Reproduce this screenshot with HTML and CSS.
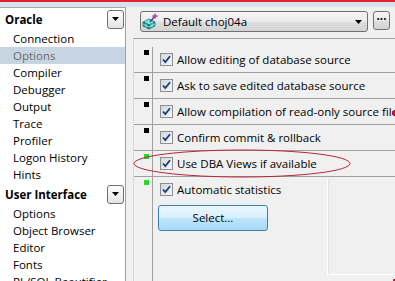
FILE: index.html
```html
<!DOCTYPE html>
<html>
<head>
  <title>Preferences</title>
  <link rel="stylesheet" href="styles.css">
</head>

<body>
  <div class="top-bar"></div>

  <div class="main">
    <div class="nav">
      <div class="nav-head">Oracle
        <span class="drop-btn"><svg width="7" height="4" viewBox="0 0 7 4"><path d="M0 0h7L3.5 4z" fill="#000"/></svg></span>
      </div>
      <div class="nav-item">Connection</div>
      <div class="nav-item selected">Options</div>
      <div class="nav-item">Compiler</div>
      <div class="nav-item">Debugger</div>
      <div class="nav-item">Output</div>
      <div class="nav-item">Trace</div>
      <div class="nav-item">Profiler</div>
      <div class="nav-item">Logon History</div>
      <div class="nav-item">Hints</div>
      <div class="nav-head">User Interface
        <span class="drop-btn"><svg width="7" height="4" viewBox="0 0 7 4"><path d="M0 0h7L3.5 4z" fill="#000"/></svg></span>
      </div>
      <div class="nav-item">Options</div>
      <div class="nav-item">Object Browser</div>
      <div class="nav-item">Editor</div>
      <div class="nav-item">Fonts</div>
      <div class="nav-item">PL/SQL Beautifier</div>
    </div>

    <div class="content">
      <div class="profile-row">
        <div class="combo">
          <svg class="combo-icon" width="17" height="17" viewBox="0 0 17 17">
            <path d="M1 9l6-3 6 3-6 3z" fill="#5fd6d0" stroke="#0d6e70" stroke-width="0.8"/>
            <path d="M1 9v4l6 3v-4z" fill="#1a9a98" stroke="#0d6e70" stroke-width="0.8"/>
            <path d="M7 12v4l6-3V9z" fill="#2bb5b2" stroke="#0d6e70" stroke-width="0.8"/>
            <path d="M3 8l6 3M5 7l6 3M4 10.5v4M10 10.5v4M1 11l6 3 6-3" stroke="#d8f6f4" stroke-width="0.6" fill="none"/>
            <path d="M8 9l5-6" stroke="#6a2a7a" stroke-width="1.2"/>
            <path d="M13 0.5l0.9 2 2 0.5-2 0.7-0.9 2-0.8-2-2-0.7 2-0.5z" fill="#d03cc8" stroke="#7a1f78" stroke-width="0.4"/>
          </svg>
          <span class="combo-text">Default choj04a</span>
          <svg class="combo-arrow" width="7" height="4" viewBox="0 0 7 4"><path d="M0 0h7L3.5 4z" fill="#000"/></svg>
        </div>
        <div class="dots-btn">&middot;&middot;&middot;</div>
      </div>

      <div class="grid">
        <div class="grid-row">
          <div class="gutter"><span class="mark"></span></div>
          <div class="cell"><span class="check"></span>Allow editing of database source</div>
        </div>
        <div class="grid-row">
          <div class="gutter"><span class="mark"></span></div>
          <div class="cell"><span class="check"></span>Ask to save edited database source</div>
        </div>
        <div class="grid-row">
          <div class="gutter"><span class="mark"></span></div>
          <div class="cell"><span class="check"></span>Allow compilation of read-only source files</div>
        </div>
        <div class="grid-row">
          <div class="gutter"><span class="mark"></span></div>
          <div class="cell"><span class="check"></span>Confirm commit &amp; rollback</div>
        </div>
        <div class="grid-row">
          <div class="gutter"><span class="mark green"></span></div>
          <div class="cell"><span class="check"></span>Use DBA Views if available</div>
        </div>
        <div class="grid-row last">
          <div class="gutter"><span class="mark green"></span></div>
          <div class="cell-wide">
            <div class="cell-left">
              <div class="cell"><span class="check"></span>Automatic statistics</div>
              <div class="select-btn">Select...</div>
            </div>
            <div class="frame"></div>
          </div>
        </div>
      </div>
    </div>
  </div>

  <svg class="marks" width="395" height="281" viewBox="0 0 395 281">
    <ellipse cx="242" cy="163.5" rx="108" ry="13.5" fill="none" stroke="#b8243a" stroke-width="1"/>
    <rect x="392" y="111" width="3" height="4" fill="#c01830"/>
    <rect x="393" y="279" width="2" height="2" fill="#e01020"/>
  </svg>
</body>
</html>
```

FILE: styles.css
```css
body {
  margin: 0;
  padding: 0;
  width: 395px;
  height: 281px;
  overflow: hidden;
  background-color: #f0f0f0;
  font-family: 'Open Sans', 'Noto Sans', sans-serif;
  font-size: 11.5px;
  color: #000;
}

.top-bar {
  height: 5px;
  border-top: 2px solid #e2232b;
  background-color: #d6e2ef;
}

.main {
  display: flex;
  height: 274px;
}

.nav {
  width: 125px;
  flex: none;
  background-color: #fff;
  border-top: 1px solid #a8a8a8;
  border-right: 1px solid #a0a0a0;
}

.nav-head {
  display: flex;
  align-items: center;
  justify-content: space-between;
  height: 22px;
  padding-left: 5px;
  padding-right: 1px;
  font-weight: bold;
}

.drop-btn {
  display: flex;
  align-items: center;
  justify-content: center;
  width: 15px;
  height: 17px;
  border: 1px solid #6f6f6f;
  border-radius: 3px;
  background: linear-gradient(#ffffff, #e4e4e4);
}

.nav-item {
  height: 17px;
  line-height: 17px;
  padding-left: 13px;
}

.nav-item.selected {
  background-color: #c7d5e3;
  color: #6b6b6b;
}

.content {
  flex: 1;
  min-width: 0;
}

.profile-row {
  display: flex;
  align-items: flex-start;
  gap: 5px;
  padding: 4px 0 0 14px;
  height: 27px;
}

.combo {
  display: flex;
  align-items: center;
  width: 221px;
  flex: none;
  height: 19px;
  border: 1px solid #707070;
  border-radius: 3px;
  background: linear-gradient(#f4f4f4 0%, #ebebeb 50%, #dddddd 51%, #d4d4d4 100%);
  padding-right: 5px;
}

.combo-icon {
  margin-left: 1px;
}

.combo-text {
  margin-left: 4px;
  flex: 1;
}

.dots-btn {
  width: 15px;
  flex: none;
  height: 17px;
  line-height: 14px;
  text-align: center;
  font-weight: bold;
  border: 1px solid #707070;
  border-radius: 3px;
  background: linear-gradient(#f4f4f4 0%, #ebebeb 50%, #dddddd 51%, #d4d4d4 100%);
}

.grid {
  margin-left: 7px;
  border-top: 1px solid #a0a0a0;
  border-left: 1px solid #dadada;
  padding-top: 8px;
}

.grid-row {
  display: flex;
  height: 25px;
  border-bottom: 1px solid #a0a0a0;
}

.grid-row.last {
  height: 110px;
  border-bottom: none;
}

.gutter {
  width: 19px;
  flex: none;
  border-right: 1px solid #a0a0a0;
  padding: 3px 0 0 10px;
  box-sizing: border-box;
}

.mark {
  display: block;
  width: 5px;
  height: 5px;
  background-color: #000;
}

.mark.green {
  background-color: #22dd22;
}

.cell {
  display: flex;
  align-items: center;
  height: 25px;
  white-space: nowrap;
  padding-left: 7px;
}

.check {
  width: 11px;
  height: 11px;
  margin-right: 4px;
  flex: none;
  border: 1px solid #8e8f8f;
  background:
    url("data:image/svg+xml,%3Csvg xmlns='http://www.w3.org/2000/svg' width='11' height='11'%3E%3Cpath d='M2 5.5l2.3 2.6L9 2.2' fill='none' stroke='%23213c7a' stroke-width='1.8'/%3E%3C/svg%3E"),
    linear-gradient(135deg, #cdd6e0, #f8f8f8);
}

.cell-wide {
  display: flex;
  flex: 1;
}

.cell-left {
  width: 174px;
  flex: none;
}

.select-btn {
  width: 108px;
  height: 24px;
  line-height: 23px;
  margin: 3px 0 0 5px;
  text-align: center;
  border: 1px solid #3c7fb1;
  border-radius: 3px;
  background: linear-gradient(#eaf6fd 0%, #d9f0fc 50%, #bee6fd 51%, #a7d9f5 100%);
}

.frame {
  flex: 1;
  margin-top: 2px;
  height: 95px;
  border-left: 1px solid #ffffff;
  border-bottom: 1px solid #ffffff;
  box-shadow: inset 1px 0 0 #e2e2e2;
}

.marks {
  position: absolute;
  left: 0;
  top: 0;
  pointer-events: none;
}
```
